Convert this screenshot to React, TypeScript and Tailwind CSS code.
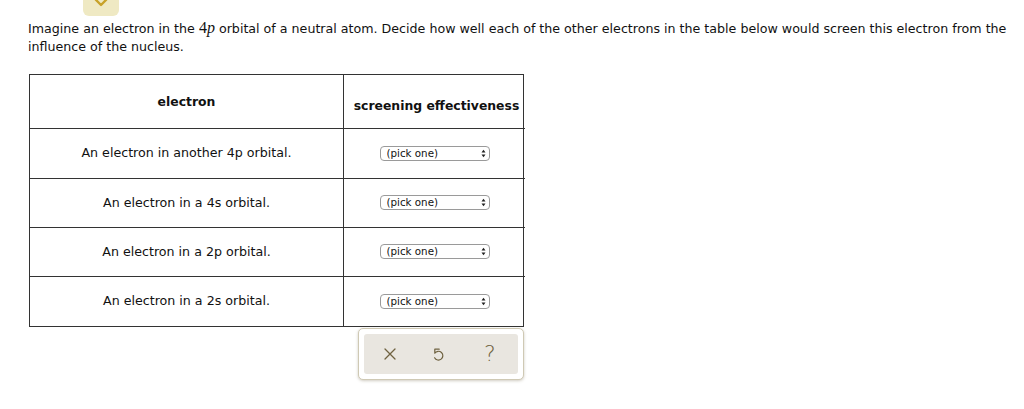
import { useState } from 'react'

const ROWS = [
  { text: 'An electron in another 4p orbital.', h: 'h-[50px]' },
  { text: 'An electron in a 4s orbital.', h: 'h-[49px]' },
  { text: 'An electron in a 2p orbital.', h: 'h-[49px]' },
  { text: 'An electron in a 2s orbital.', h: 'h-[50px]' },
]

function PickOne() {
  const [value, setValue] = useState('')
  return (
    <div className="relative -mt-[1px] h-[15px] w-[110px]">
      <select
        value={value}
        onChange={(e) => setValue(e.target.value)}
        className="block h-full w-full appearance-none rounded-[4px] border border-[#9a9a9a] bg-white py-0 pl-[6px] text-[10.3px] leading-[13px] text-[#111] outline-none"
      >
        <option value="">(pick one)</option>
        <option value="more">more effective</option>
        <option value="same">about the same</option>
        <option value="less">less effective</option>
      </select>
      <svg className="pointer-events-none absolute right-[4px] top-[3px]" width="5" height="9" viewBox="0 0 5 9">
        <path d="M0.5 3.5 L2.5 0.8 L4.5 3.5 Z" fill="#222" />
        <path d="M0.5 5.5 L2.5 8.2 L4.5 5.5 Z" fill="#222" />
      </svg>
    </div>
  )
}

export default function App() {
  return (
    <div className="h-[409px] w-[1024px] overflow-hidden bg-white font-['DejaVu_Sans',Verdana,sans-serif] text-[#111]">
      {/* collapsed toolbar tab */}
      <div className="ml-[83px] flex h-[16px] w-[36px] items-start justify-center rounded-b-[6px] bg-[#efe9c3]">
        <svg width="14" height="10" viewBox="0 0 14 10" className="-mt-[2px]">
          <path d="M2 2 L7 7 L12 2" fill="none" stroke="#c8a229" strokeWidth="2.4" strokeLinecap="round" strokeLinejoin="round" />
        </svg>
      </div>

      <p className="mt-[4px] pl-[28px] pr-[10px] text-[12.65px] leading-[18px]">
        Imagine an electron in the{' '}
        <span className="font-['Liberation_Serif',serif] text-[16px] leading-none">
          4<i>p</i>
        </span>{' '}
        orbital of a neutral atom. Decide how well each of the other electrons in the table below would screen this electron from the
        influence of the nucleus.
      </p>

      <div className="ml-[29px] mt-[18px] w-[495px]">
        <div className="grid grid-cols-[314px_181px] border border-[#333] text-[12.65px]">
          <div className="flex h-[53px] items-center justify-center border-r border-[#333] pt-[2px] text-[12.4px] font-bold">
            electron
          </div>
          <div className="flex h-[53px] items-center justify-center whitespace-nowrap pl-[4px] pt-[10px] text-[12.4px] font-bold">
            screening effectiveness
          </div>
          {ROWS.map((row) => (
            <div key={row.text} className="contents">
              <div className={`flex ${row.h} items-center justify-center border-r border-t border-[#333]`}>{row.text}</div>
              <div className={`flex ${row.h} items-center justify-center border-t border-[#333]`}>
                <PickOne />
              </div>
            </div>
          ))}
        </div>

        <div className="ml-[329px] mt-[1px] w-[166px] rounded-[5px] border border-[#cfc9b4] bg-white p-[5px] shadow-[0_1px_3px_rgba(120,110,80,0.35)]">
          <div className="flex h-[40px] items-center rounded-[3px] bg-[#e9e6e0] pl-[20px]">
            <svg width="12" height="12" viewBox="0 0 12 12">
              <path d="M1 1 L11 11 M11 1 L1 11" stroke="#6f6240" strokeWidth="1.3" strokeLinecap="round" />
            </svg>
            <svg width="14" height="16" viewBox="0 0 14 16" className="ml-[35px]">
              <path
                d="M8.2 3.2 H3.8 V7.2 A4.4 4.4 0 1 1 3.6 11.8"
                fill="none"
                stroke="#6f6240"
                strokeWidth="1.2"
                strokeLinecap="round"
                strokeLinejoin="round"
              />
            </svg>
            <span className="ml-[39px] font-['DejaVu_Sans',sans-serif] text-[22px] font-extralight leading-none text-[#6f6240]">?</span>
          </div>
        </div>
      </div>
    </div>
  )
}
